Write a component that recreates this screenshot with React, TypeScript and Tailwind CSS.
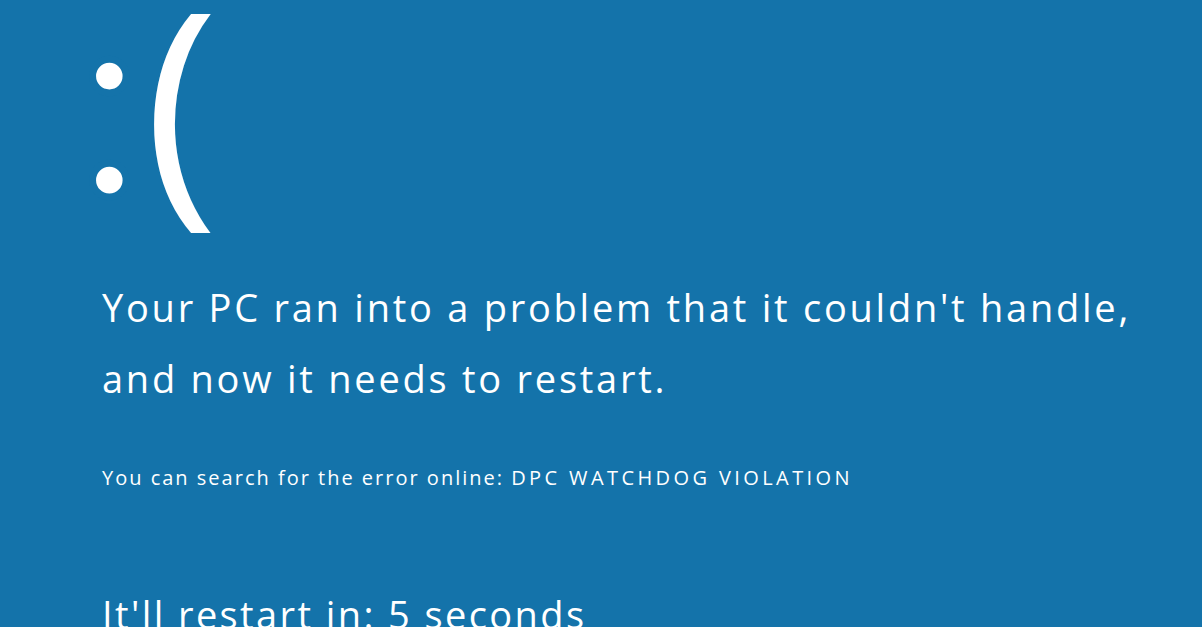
export default function App() {
  return (
    <div
      className="w-[1202px] h-[627px] overflow-hidden bg-[#1473aa] text-white pl-[102px]"
      style={{ fontFamily: '"Open Sans", "Noto Sans", sans-serif' }}
    >
      <div className="h-[250px] flex items-start">
        <span className="inline-block w-[62px] -ml-[20px]">
          <span
            className="inline-block text-[285px] leading-[280px] -ml-[12px] -mt-[43px] [-webkit-text-stroke:7px_#1473aa]"
            style={{ fontFamily: '"Liberation Serif", serif' }}
          >
            :
          </span>
        </span>
        <span className="inline-block text-[252px] leading-[250px] font-normal -mt-[29px]">(</span>
      </div>
      <div className="mt-[22px] text-[38px] leading-[71px] tracking-[2.75px]">
        <div>Your PC ran into a problem that it couldn't handle,</div>
        <div>and now it needs to restart.</div>
      </div>
      <div className="mt-[49px] text-[20px] leading-[30px] tracking-[2px]">
        You can search for the error online: <span className="tracking-[3.4px]">DPC WATCHDOG VIOLATION</span>
      </div>
      <div className="mt-[86px] text-[38px] leading-[71px] tracking-[2.4px]">It'll restart in: 5 seconds</div>
    </div>
  );
}
